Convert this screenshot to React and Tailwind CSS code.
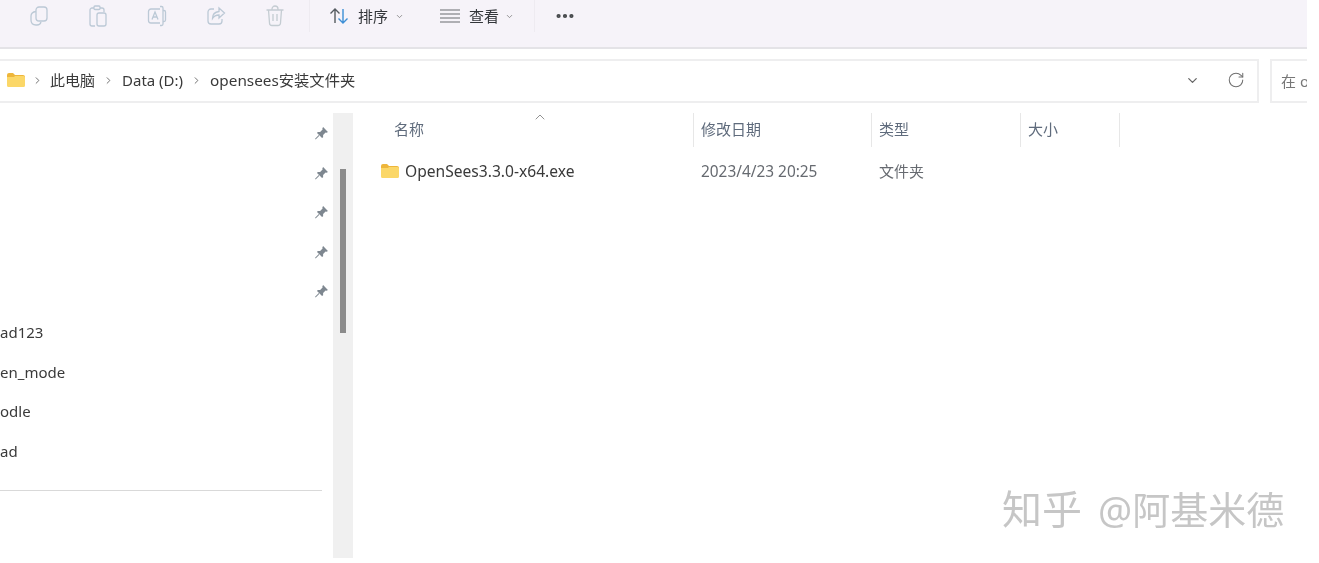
import { MoreHorizontal, ChevronDown, ChevronRight, ChevronUp, RotateCw } from 'lucide-react';

const FONT = 'font-["Noto_Sans","Noto_Sans_CJK_SC",sans-serif]';

function CopyIcon() {
  return (
    <svg width="20" height="22" viewBox="0 0 20 22" fill="none" stroke="#bcc9d6" strokeWidth="1.3">
      <rect x="7" y="2" width="11" height="14" rx="3" />
      <path d="M7 6.5 C3.5 7 2 8.5 2 11 v4 c0 3 2 5 5 5 h1 c2 0 3.5 -1 4 -3" />
    </svg>
  );
}

function PasteIcon() {
  return (
    <svg width="20" height="22" viewBox="0 0 20 22" fill="none" stroke="#bcc9d6" strokeWidth="1.3">
      <path d="M6 3 H4 a2 2 0 0 0 -2 2 v14 a2 2 0 0 0 2 2 h3" />
      <path d="M12 3 h2 a2 2 0 0 1 2 2 v2" />
      <rect x="6" y="1" width="6" height="3.5" rx="1" />
      <rect x="9" y="8" width="9" height="13" rx="2" />
    </svg>
  );
}

function RenameIcon() {
  return (
    <svg width="20" height="22" viewBox="0 0 20 22" fill="none" stroke="#bcc9d6" strokeWidth="1.3">
      <path d="M13 4 H4 a2.5 2.5 0 0 0 -2.500 2.500 v9 a2.500 2.500 0 0 0 2.500 2.500 h9" />
      <path d="M16 5.500 h1 a1.500 1.500 0 0 1 1.500 1.500 v8 a1.500 1.500 0 0 1 -1.500 1.500 h-1" />
      <path d="M13 1.500 h1.500 a1.500 1.500 0 0 1 1.500 1.500 v16 a1.500 1.500 0 0 1 -1.500 1.500 h-1.500" />
      <path d="M5 14.500 L8 7 L11 14.500 M6 12 h4" />
    </svg>
  );
}

function ShareIcon() {
  return (
    <svg width="20" height="20" viewBox="0 0 20 20" fill="none" stroke="#bcc9d6" strokeWidth="1.3">
      <path d="M8 3 H5 a3 3 0 0 0 -3 3 v9 a3 3 0 0 0 3 3 h8 a3 3 0 0 0 3 -3 v-2" />
      <path d="M13 2 l5.500 5 l-5.500 5 v-3 c-3 0 -5 1 -6.500 3.500 c0 -4 2.500 -6.500 6.500 -7 z" />
    </svg>
  );
}

function TrashIcon() {
  return (
    <svg width="20" height="22" viewBox="0 0 20 22" fill="none" stroke="#c4ccd2" strokeWidth="1.3">
      <path d="M1.500 5 h17 M7 5 V4 a3 3 0 0 1 6 0 v1" />
      <path d="M3.500 5 l1 13 a2.500 2.500 0 0 0 2.500 2.500 h6 a2.500 2.500 0 0 0 2.500 -2.500 l1 -13" />
      <path d="M8 9 v7 M12 9 v7" />
    </svg>
  );
}

function SortIcon() {
  return (
    <svg width="20" height="20" viewBox="0 0 20 20" fill="none" strokeWidth="1.4">
      <path d="M6 17 V3 M1.500 7.500 L6 3 L10.500 7.500" stroke="#555b60" />
      <path d="M14 3 V17 M9.500 12.500 L14 17 L18.500 12.500" stroke="#3d8fd6" />
    </svg>
  );
}

function ViewIcon() {
  return (
    <svg width="20" height="14" viewBox="0 0 20 14" fill="none" stroke="#686c70" strokeWidth="1.1">
      <path d="M0 1 h20 M0 5 h20 M0 9 h20 M0 13 h20" />
    </svg>
  );
}

function FolderIcon({ width, height }) {
  return (
    <svg width={width} height={height} viewBox="0 0 18 14">
      <path d="M0 2 a2 2 0 0 1 2 -2 h4 l2 2 h8 a2 2 0 0 1 2 2 v2 H0 z" fill="#eeb63b" />
      <path d="M0 4 l7 0 l1 -1 h8.500 a1.500 1.500 0 0 1 1.500 1.500 v8 a1.500 1.500 0 0 1 -1.500 1.500 H1.500 a1.500 1.500 0 0 1 -1.500 -1.500 z" fill="#fbd768" />
    </svg>
  );
}

function PinIcon() {
  return (
    <svg width="15" height="15" viewBox="0 0 14 14" fill="#7e8790">
      <path d="M8.500 1 L13 5.500 L11.800 6.200 L10.800 6 L8.500 8.300 L8.500 10.500 L7.500 11.200 L2.800 6.500 L3.500 5.500 L5.700 5.500 L8 3.200 L7.800 2.200 z" />
      <path d="M5 9 L1.500 12.500 L1 12 L4.500 8.500 z" />
    </svg>
  );
}

const TOOL_ICONS = [CopyIcon, PasteIcon, RenameIcon, ShareIcon, TrashIcon];
const CRUMBS = ['此电脑', 'Data (D:)', 'opensees安装文件夹'];
const SIDEBAR = ['ad123', 'en_mode', 'odle', 'ad'];

function Toolbar() {
  return (
    <div className="flex h-[49px] items-start border-b-2 border-[#e4e3e7] bg-[#f6f3f9]">
      <div className="flex w-[310px] shrink-0 h-[32px] items-center border-r border-[#eeebf1] pl-[29px] gap-[39px]">
        {TOOL_ICONS.map((Icon, i) => (
          <div key={i} className="flex w-[20px] justify-center">
            <Icon />
          </div>
        ))}
      </div>
      <div className="flex h-[32px] items-center pl-[19px] text-[15px] text-[#33363a]">
        <SortIcon />
        <span className="ml-[9px] w-[30px]">排序</span>
        <ChevronDown size={9} className="ml-[7px] text-[#777]" />
        <div className="ml-[36px]"><ViewIcon /></div>
        <span className="ml-[9px] w-[30px]">查看</span>
        <ChevronDown size={9} className="ml-[6px] text-[#777]" />
        <div className="ml-[20px] h-[32px] border-r border-[#eeebf1]" />
        <MoreHorizontal size={22} strokeWidth={2.6} className="ml-[19px] text-[#44474a]" />
      </div>
    </div>
  );
}

function AddressBar() {
  return (
    <div className="mt-[10px] flex h-[44px] items-stretch">
      <div className="-ml-[2px] flex w-[1261px] items-center border-2 border-[#eeeeef] pb-[2px] pl-[7px] text-[15px] text-[#3a3a3a]">
        <FolderIcon width={18} height={14} />
        {CRUMBS.map((crumb, i) => (
          <div key={crumb} className="flex items-center">
            <ChevronRight size={11} className={i === 0 ? 'mx-[7px] text-[#666]' : 'mx-[8px] text-[#666]'} />
            <span className={i === 2 ? 'text-[15.300px]' : ''}>{crumb}</span>
          </div>
        ))}
        <ChevronDown size={15} className="ml-auto text-[#666]" />
        <RotateCw size={18} strokeWidth={1.4} className="ml-[27px] mr-[12px] text-[#707070]" />
      </div>
      <div className="ml-[11px] flex flex-1 items-center overflow-hidden border-2 border-r-0 border-[#eeeeef] pl-[9px] text-[15px] text-[#777]">
        <span className="whitespace-nowrap">在 o</span>
      </div>
    </div>
  );
}

function Sidebar() {
  return (
    <div className="flex w-[353px] shrink-0 items-start">
      <div className="w-[333px] shrink-0 pt-px">
        {[0, 1, 2, 3, 4].map((i) => (
          <div key={i} className="flex h-[39.500px] items-center justify-end pr-[4px]">
            <PinIcon />
          </div>
        ))}
        {SIDEBAR.map((name) => (
          <div key={name} className="flex h-[39.500px] items-center pt-[2px] text-[15px] text-[#3a3a3a]">
            {name}
          </div>
        ))}
        <div className="mt-[20px] mr-[11px] h-px bg-[#d9d9d9]" />
      </div>
      <div className="h-[445px] w-[20px] shrink-0 bg-[#f0f0f0] pl-[7px] pt-[56px]">
        <div className="h-[164px] w-[6px] bg-[#8b8b8b]" />
      </div>
    </div>
  );
}

function FileList() {
  return (
    <div className="relative flex-1 pl-[28px]">
      <ChevronUp size={16} strokeWidth={1.4} className="absolute left-[179px] top-[-4px] text-[#8a8a8a]" />
      <div className="flex h-[34px] items-center text-[15px] text-[#5f6b7c]">
        <div className="h-full w-[312px] pl-[13px] leading-[33px]">名称</div>
        <div className="h-full w-[178px] border-l border-[#e7e7e7] pl-[7px] leading-[33px]">修改日期</div>
        <div className="h-full w-[149px] border-l border-[#e7e7e7] pl-[7px] leading-[33px]">类型</div>
        <div className="h-full w-[100px] border-x border-[#e7e7e7] pl-[7px] leading-[33px]">大小</div>
      </div>
      <div className="mt-[8px] flex h-[32px] items-center text-[15.600px] text-[#3a3a3a]">
        <div className="flex w-[312px] items-center gap-[6px]">
          <FolderIcon width={18} height={14} />
          <span className="pt-[2px]">OpenSees3.3.0-x64.exe</span>
        </div>
        <div className="w-[178px] pl-[8px] pt-[2px] text-[15.400px] text-[#666a70]">2023/4/23 20:25</div>
        <div className="pl-[8px] text-[15px] text-[#666a70]">文件夹</div>
      </div>
    </div>
  );
}

export default function App() {
  return (
    <div className={`${FONT} relative h-[563px] w-[1319px] overflow-hidden bg-white blur-[0.4px]`}>
      <div className="w-[1307px]">
        <Toolbar />
        <AddressBar />
        <div className="mt-[10px] flex">
          <Sidebar />
          <FileList />
        </div>
      </div>
      <div className="absolute left-[1002px] top-[482px] flex items-center whitespace-nowrap leading-[54px] text-[#c6c6c6]">
        <span className="text-[40px]">知乎</span>
        <span className="ml-[16px] text-[38px]">@阿基米德</span>
      </div>
    </div>
  );
}
